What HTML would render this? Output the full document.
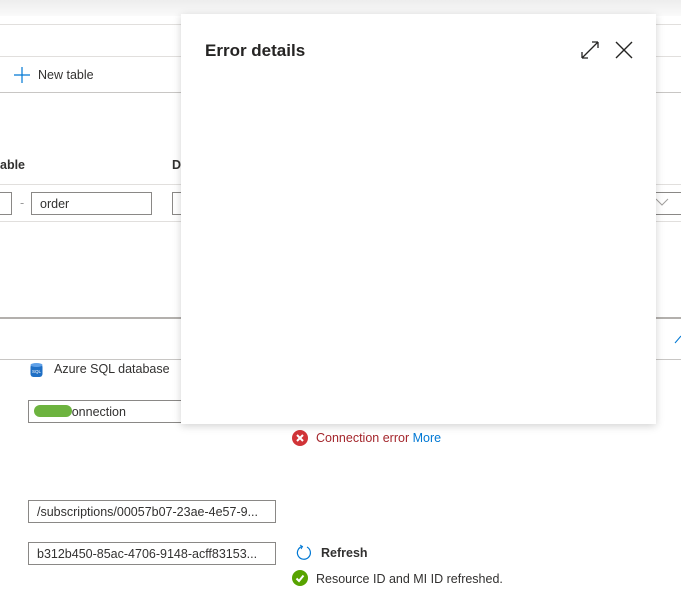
<!DOCTYPE html>
<html><head><meta charset="utf-8"><style>
*{margin:0;padding:0;box-sizing:border-box}
body{width:681px;height:613px;background:#fff;position:relative;overflow:hidden;font-family:"Liberation Sans",sans-serif;font-size:12.5px;color:#323130}
.a{position:absolute}
.hl{position:absolute;left:0;width:681px;height:1px;background:#e1dfdd}
.box{position:absolute;border:1px solid #8a8886;height:23px;padding:4px 8px;white-space:nowrap;overflow:hidden}
</style></head><body>
<div class="a" style="left:0;top:0;width:681px;height:16px;background:linear-gradient(#ededed,#fafafa)"></div>
<div class="hl" style="top:24px"></div>
<div class="hl" style="top:56px"></div>
<div class="hl" style="top:92px;background:#c8c6c4"></div>
<div class="hl" style="top:184px"></div>
<div class="hl" style="top:221px"></div>
<div class="hl" style="top:317px;height:2px;background:#b3b0ad"></div>
<div class="hl" style="top:359px;background:#c8c6c4"></div>
<svg class="a" style="left:14px;top:67px" width="16" height="16"><path d="M8 0V16M0 8H16" stroke="#0078d4" stroke-width="1.2"/></svg>
<div class="a" style="left:38px;top:68px">New table</div>
<div class="a" style="left:0;top:158px;font-weight:bold">able</div>
<div class="a" style="left:172px;top:158px;font-weight:bold">D</div>
<div class="box" style="left:-10px;top:192px;width:22px"></div>
<div class="a" style="left:20px;top:196px;color:#999">-</div>
<div class="box" style="left:31px;top:192px;width:121px">order</div>
<div class="box" style="left:172px;top:192px;width:30px"></div>
<div class="box" style="left:620px;top:192px;width:70px"></div>
<svg class="a" style="left:655px;top:197px" width="14" height="10"><path d="M1 2L7 8L13 2" stroke="#a19f9d" fill="none"/></svg>
<svg class="a" style="left:674px;top:334px" width="8" height="10"><path d="M1 9L7 2" stroke="#0078d4"/></svg>
<svg class="a" style="left:30px;top:362px" width="13" height="16"><rect x="0.5" y="2" width="12" height="13" rx="3" fill="#1f6fc5"/><ellipse cx="6.5" cy="3" rx="6" ry="2" fill="#5ea0e8"/><text x="6.5" y="11" font-size="4.5" fill="#fff" text-anchor="middle" font-family="Liberation Sans">SQL</text></svg>
<div class="a" style="left:54px;top:362px">Azure SQL database</div>
<div class="box" style="left:28px;top:400px;width:180px">&nbsp;&nbsp;&nbsp;&nbsp;&nbsp;&nbsp;&nbsp;&nbsp;&nbsp;&nbsp;onnection</div>
<div class="a" style="left:34px;top:405px;width:38px;height:12px;border-radius:6px;background:#6db33f"></div>
<svg class="a" style="left:292px;top:430px" width="16" height="16"><circle cx="8" cy="8" r="8" fill="#d13438"/><path d="M5 5L11 11M11 5L5 11" stroke="#fff" stroke-width="2"/></svg>
<div class="a" style="left:316px;top:431px;color:#a4262c">Connection error <span style="color:#0078d4">More</span></div>
<div class="box" style="left:28px;top:500px;width:248px">/subscriptions/00057b07-23ae-4e57-9...</div>
<div class="box" style="left:28px;top:542px;width:248px">b312b450-85ac-4706-9148-acff83153...</div>
<svg class="a" style="left:296px;top:544px" width="16" height="18"><path d="M6 2.5A6.5 6.5 0 1 0 11 3" stroke="#0078d4" fill="none" stroke-width="1.2"/><path d="M4 1L6.5 2.5L5 5" stroke="#0078d4" fill="none"/></svg>
<div class="a" style="left:321px;top:546px;font-weight:bold">Refresh</div>
<svg class="a" style="left:292px;top:570px" width="16" height="16"><circle cx="8" cy="8" r="8" fill="#57a300"/><path d="M4.5 8.5L7 11L11.5 5.5" stroke="#fff" stroke-width="2" fill="none"/></svg>
<div class="a" style="left:316px;top:572px">Resource ID and MI ID refreshed.</div>
<div class="a" style="left:181px;top:14px;width:475px;height:410px;background:#fff;box-shadow:0 2px 8px rgba(0,0,0,0.18)">
<div class="a" style="left:24px;top:27px;font-size:17px;font-weight:bold;color:#252423">Error details</div>
<svg class="a" style="left:400px;top:27px" width="18" height="18"><path d="M1 17L17 1M1 17V11M1 17H7M17 1H11M17 1V7" stroke="#252423" fill="none" stroke-width="1.3"/></svg>
<svg class="a" style="left:434px;top:27px" width="18" height="18"><path d="M1 1L17 17M17 1L1 17" stroke="#252423" stroke-width="1.4"/></svg>
</div>
</body></html>
